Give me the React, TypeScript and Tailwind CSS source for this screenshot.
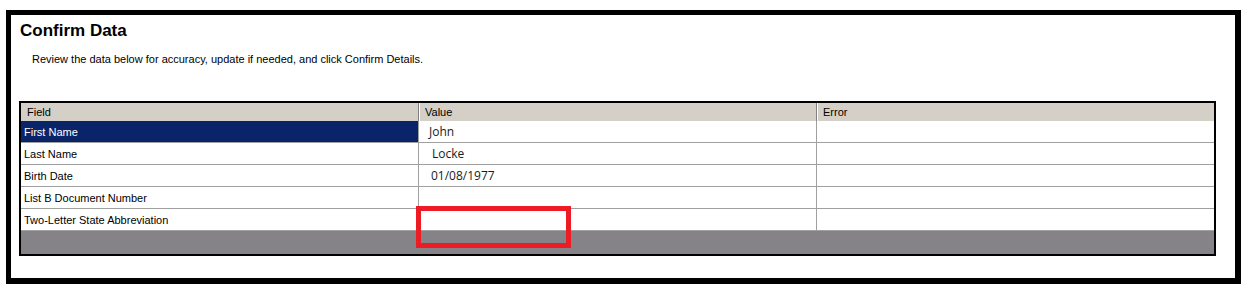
import React from "react";

const rows = [
  { field: "First Name", value: "John", pl: "pl-[10px]", selected: true },
  { field: "Last Name", value: "Locke", pl: "pl-[13px]", selected: false },
  { field: "Birth Date", value: "01/08/1977", pl: "pl-[12px]", selected: false },
  { field: "List B Document Number", value: "", pl: "pl-[12px]", selected: false },
  { field: "Two-Letter State Abbreviation", value: "", pl: "pl-[12px]", selected: false },
];

export default function App() {
  return (
    <div className="w-[1255px] h-[294px] bg-white pt-[10px] pl-[6px]" style={{ fontFamily: '"Liberation Sans", Arial, sans-serif' }}>
      <div className="w-[1235px] h-[274px] border-[5px] border-r-[6px] border-b-[6px] border-black bg-white flex flex-col">
        <div className="pl-[9px] pt-[6px] text-[17px] leading-[19px] font-bold text-black">Confirm Data</div>
        <div className="pl-[21px] mt-[13px] text-[11px] leading-[13px] text-black">
          Review the data below for accuracy, update if needed, and click Confirm Details.
        </div>
        <div className="relative ml-[8px] mt-[35px] w-[1197px] border-2 border-black flex flex-col">
          <div className="flex h-[18px] bg-[#d4d0c8] text-[11px] leading-[19px] text-black">
            <div className="w-[397px] pl-[6px]">Field</div>
            <div className="w-[398px] flex">
              <div className="w-px bg-[#808080]" />
              <div className="w-px bg-white" />
              <div className="pl-[5px]">Value</div>
            </div>
            <div className="flex-1 flex">
              <div className="w-px bg-[#808080]" />
              <div className="w-px bg-white" />
              <div className="pl-[5px]">Error</div>
            </div>
          </div>
          {rows.map((r) => (
            <div key={r.field} className="flex h-[22px] border-b border-[#a0a0a0] bg-white">
              <div
                className={
                  "w-[397px] pl-[3px] text-[11px] leading-[23px] " +
                  (r.selected ? "bg-[#0a246a] text-white" : "text-black")
                }
              >
                {r.field}
              </div>
              <div
                className={"w-[398px] border-l border-[#a0a0a0] text-[12px] leading-[21px] text-[#1a1a1a] " + r.pl}
                style={{ fontFamily: '"Open Sans", "Noto Sans", sans-serif' }}
              >
                {r.value}
              </div>
              <div className="flex-1 border-l border-[#a0a0a0]" />
            </div>
          ))}
          <div className="h-[23px] bg-[#858387]" />
          <div className="absolute left-[395px] top-[103px] w-[155px] h-[42px] border-[5px] border-[#ed1c24]" />
        </div>
      </div>
    </div>
  );
}
